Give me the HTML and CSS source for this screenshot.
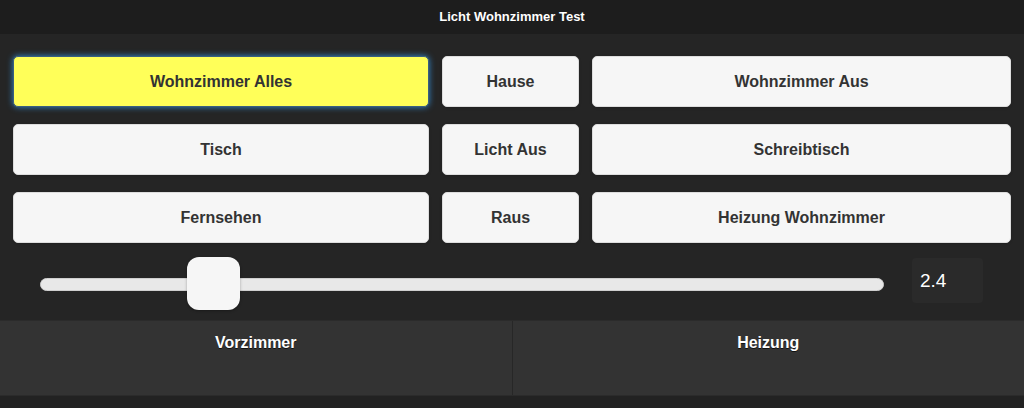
FILE: index.html
```html
<!DOCTYPE html>
<html lang="de">
<head>
<meta charset="utf-8">
<title>Licht Wohnzimmer Test</title>
<link rel="stylesheet" href="styles.css">
</head>
<body>
<header class="header">Licht Wohnzimmer Test</header>
<main class="content">
  <div class="grid">
    <button class="btn active">Wohnzimmer Alles</button>
    <button class="btn">Hause</button>
    <button class="btn">Wohnzimmer Aus</button>
    <button class="btn">Tisch</button>
    <button class="btn">Licht Aus</button>
    <button class="btn">Schreibtisch</button>
    <button class="btn">Fernsehen</button>
    <button class="btn">Raus</button>
    <button class="btn">Heizung Wohnzimmer</button>
  </div>
  <div class="slider-row">
    <div class="slider">
      <div class="track"></div>
      <div class="handle" style="left: 147px"></div>
    </div>
    <div class="value">2.4</div>
  </div>
</main>
<nav class="navbar">
  <div class="nav-item">Vorzimmer</div>
  <div class="nav-item">Heizung</div>
</nav>
</body>
</html>
```
FILE: styles.css
```css
html, body {
  margin: 0;
  padding: 0;
  background: #222222;
  font-family: "Liberation Sans", Arial, sans-serif;
  height: 408px;
  overflow: hidden;
}

.header {
  height: 34px;
  line-height: 34px;
  background: #1d1d1d;
  color: #ffffff;
  text-align: center;
  font-size: 13px;
  font-weight: bold;
}

.content {
  background: #252525;
  padding: 22px 13px 0 13px;
  height: 286px;
  box-sizing: border-box;
}

.grid {
  display: grid;
  grid-template-columns: 416px 137px 419px;
  grid-auto-rows: 51px;
  column-gap: 13px;
  row-gap: 17px;
}

.btn {
  margin: 0;
  border: 1px solid #dddddd;
  border-radius: 5px;
  background: #f6f6f6;
  color: #333333;
  font-family: "Liberation Sans", Arial, sans-serif;
  font-size: 16px;
  font-weight: bold;
  padding: 0;
  box-shadow: 0 1px 3px rgba(0, 0, 0, 0.15);
}

.btn.active {
  background: #ffff59;
  border-color: #3a5f80;
  box-shadow: 0 0 6px #38c;
}

.slider-row {
  display: flex;
  align-items: center;
  margin-top: 14px;
  height: 53px;
}

.slider {
  position: relative;
  margin-left: 27px;
  width: 844px;
  height: 53px;
  display: flex;
  align-items: center;
}

.track {
  width: 100%;
  height: 13px;
  margin-top: 1px;
  background: #e8e8e8;
  border: 1px solid #cfcfcf;
  border-radius: 7px;
  box-sizing: border-box;
}

.handle {
  position: absolute;
  top: 0;
  width: 53px;
  height: 53px;
  background: #f6f6f6;
  border-radius: 12px;
  box-shadow: 0 1px 3px rgba(0, 0, 0, 0.3);
}

.value {
  margin-left: 28px;
  margin-top: -6px;
  width: 71px;
  height: 45px;
  box-sizing: border-box;
  padding-left: 8px;
  line-height: 45px;
  background: #2a2a2a;
  border-radius: 4px;
  color: #ffffff;
  font-size: 19px;
}

.navbar {
  display: flex;
  height: 76px;
  background: #333333;
  border-top: 1px solid #2b2b2b;
  border-bottom: 1px solid #2b2b2b;
  box-sizing: border-box;
}

.nav-item {
  flex: 1;
  text-align: center;
  color: #ffffff;
  font-size: 16px;
  font-weight: bold;
  line-height: 20px;
  padding-top: 12px;
  text-shadow: 0 1px 0 #111;
}

.nav-item + .nav-item {
  border-left: 1px solid #272727;
}
```
